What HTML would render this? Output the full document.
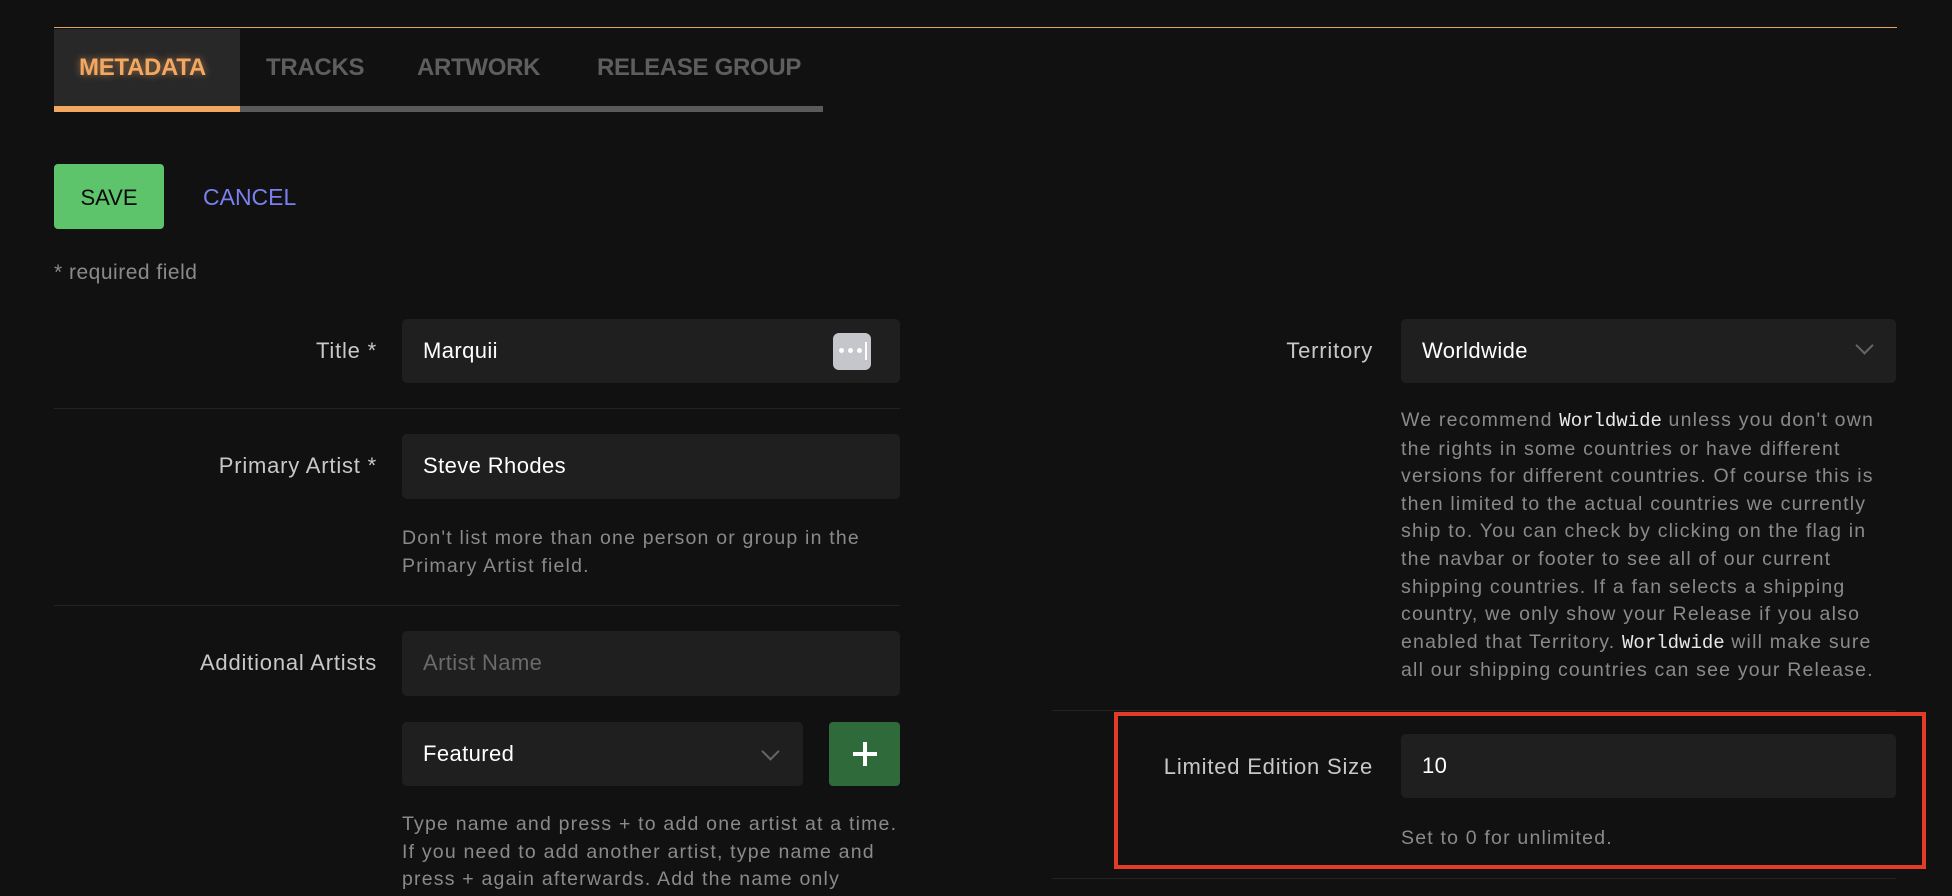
<!DOCTYPE html>
<html><head><meta charset="utf-8"><style>
*{box-sizing:border-box;margin:0;padding:0}
body{width:1952px;height:896px;background:#111;overflow:hidden;position:relative;font-family:"Liberation Sans",sans-serif;}
.a{position:absolute}
.tab{position:absolute;top:29px;height:78px;line-height:78px;font-size:24px;font-weight:bold;color:#5e5e5e;letter-spacing:-0.3px}
.lbl{position:absolute;text-align:right;font-size:22px;color:#c8c8c8;line-height:64px;letter-spacing:0.8px}
.inp{position:absolute;background:#1f1f1f;border-radius:5px;font-size:22px;color:#fff;padding-left:21px;line-height:64px;letter-spacing:0.4px}
.help{position:absolute;font-size:19.5px;color:#8a8a8a;line-height:27.6px;white-space:nowrap;letter-spacing:1.2px}
.hr{position:absolute;height:1px;background:#232323}
.mono{font-family:"Liberation Mono",monospace;color:#e8e8e8;font-size:19px;letter-spacing:0}
.chev{position:absolute;width:13px;height:13px;border-right:2px solid #666;border-bottom:2px solid #666;transform:rotate(45deg)}
</style></head><body>
<div class="a" style="left:54px;top:27px;width:1843px;height:1px;background:#e8a060"></div>
<div class="a" style="left:54px;top:29px;width:186px;height:78px;background:#282828"></div>
<div class="tab" style="left:79px;color:#f3a862;text-shadow:0 0 8px rgba(243,168,98,.6)">METADATA</div>
<div class="tab" style="left:266px">TRACKS</div>
<div class="tab" style="left:417px">ARTWORK</div>
<div class="tab" style="left:597px">RELEASE GROUP</div>
<div class="a" style="left:54px;top:106px;width:769px;height:6px;background:#5a5a5a"></div>
<div class="a" style="left:54px;top:106px;width:186px;height:6px;background:#f3a862"></div>

<div class="a" style="left:54px;top:164px;width:110px;height:65px;background:#5ec46c;border-radius:4px;color:#0a0a0a;font-size:22px;line-height:67px;text-align:center">SAVE</div>
<div class="a" style="left:203px;top:184px;font-size:23px;color:#7b7ff0">CANCEL</div>
<div class="a" style="left:54px;top:261px;font-size:21px;color:#8a8a8a;letter-spacing:0.5px">* required field</div>

<div class="lbl" style="left:54px;width:323px;top:319px">Title *</div>
<div class="inp" style="left:402px;top:319px;width:498px;height:64px">Marquii</div>
<div class="a" style="left:833px;top:333px;width:38px;height:37px;background:#c4c6cc;border-radius:6px"><span style="position:absolute;left:6px;top:15px;width:5px;height:5px;border-radius:50%;background:#fff;box-shadow:9px 0 #fff,18px 0 #fff"></span><span style="position:absolute;left:32px;top:9px;width:2px;height:18px;background:#fff"></span></div>
<div class="hr" style="left:54px;top:408px;width:846px"></div>

<div class="lbl" style="left:54px;width:323px;top:434px">Primary Artist *</div>
<div class="inp" style="left:402px;top:434px;width:498px;height:65px">Steve Rhodes</div>
<div class="help" style="left:402px;top:525px">Don't list more than one person or group in the<br>Primary Artist field.</div>
<div class="hr" style="left:54px;top:605px;width:846px"></div>

<div class="lbl" style="left:54px;width:323px;top:631px">Additional Artists</div>
<div class="inp" style="left:402px;top:631px;width:498px;height:65px;color:#6a6a6a">Artist Name</div>
<div class="inp" style="left:402px;top:722px;width:401px;height:64px">Featured</div>
<div class="chev" style="left:764px;top:745px"></div>
<div class="a" style="left:829px;top:722px;width:71px;height:64px;background:#2f6b3a;border-radius:4px"><span style="position:absolute;left:24px;top:30px;width:24px;height:4px;background:#fff"></span><span style="position:absolute;left:34px;top:20px;width:4px;height:24px;background:#fff"></span></div>
<div class="help" style="left:402px;top:811px">Type name and press + to add one artist at a time.<br>If you need to add another artist, type name and<br>press + again afterwards. Add the name only</div>

<div class="lbl" style="left:1100px;width:273px;top:319px">Territory</div>
<div class="inp" style="left:1401px;top:319px;width:495px;height:64px">Worldwide</div>
<div class="chev" style="left:1858px;top:339px"></div>
<div class="help" style="left:1401px;top:407px">We recommend <span class="mono">Worldwide</span> unless you don't own<br>the rights in some countries or have different<br>versions for different countries. Of course this is<br>then limited to the actual countries we currently<br>ship to. You can check by clicking on the flag in<br>the navbar or footer to see all of our current<br>shipping countries. If a fan selects a shipping<br>country, we only show your Release if you also<br>enabled that Territory. <span class="mono">Worldwide</span> will make sure<br>all our shipping countries can see your Release.</div>
<div class="hr" style="left:1052px;top:710px;width:844px"></div>

<div class="lbl" style="left:1100px;width:273px;top:735px">Limited Edition Size</div>
<div class="inp" style="left:1401px;top:734px;width:495px;height:64px">10</div>
<div class="help" style="left:1401px;top:825px">Set to 0 for unlimited.</div>
<div class="hr" style="left:1052px;top:878px;width:844px"></div>
<div class="a" style="left:1114px;top:712px;width:812px;height:157px;border:4px solid #e03c28"></div>
</body></html>
